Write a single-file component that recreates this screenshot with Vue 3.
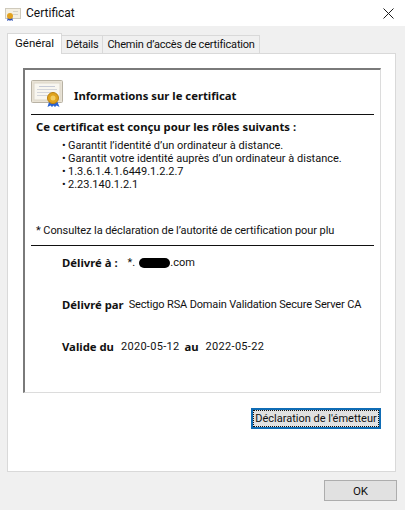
<script setup>
const purposes = [
  'Garantit l’identité d’un ordinateur à distance.',
  'Garantit votre identité auprès d’un ordinateur à distance.',
  '1.3.6.1.4.1.6449.1.2.2.7',
  '2.23.140.1.2.1'
]
const tabs = ['Général', 'Détails', 'Chemin d’accès de certification']
</script>

<template>
  <div class="dialog">
    <header class="titlebar">
      <svg class="title-icon" width="16" height="16" viewBox="0 0 16 16">
        <rect x="0.5" y="2.5" width="15" height="10" fill="#f4efe2" stroke="#cfcabc" />
        <rect x="8" y="5" width="5" height="1" fill="#d5d2c8" />
        <rect x="8" y="8" width="5" height="1" fill="#d5d2c8" />
        <path d="M3 11l-1 4 2-1 1 1 1-1 2 1-1-4z" fill="#2f4fb4" />
        <circle cx="5" cy="10" r="3" fill="#e2a11e" />
      </svg>
      <span class="title-text">Certificat</span>
      <svg class="close" width="11" height="11" viewBox="0 0 11 11">
        <path d="M0.500 0.500L10.500 10.500M10.500 0.500L0.500 10.500" stroke="#1a1a1a" fill="none" />
      </svg>
    </header>

    <main class="body">
      <nav class="tabs">
        <span
          v-for="(tab, i) in tabs"
          :key="tab"
          class="tab"
          :class="{ active: i === 0 }"
        >{{ tab }}</span>
      </nav>

      <section class="panel">
        <div class="info">
          <div class="info-head">
            <svg class="cert" width="32" height="28" viewBox="0 0 32 28">
              <rect x="0.500" y="0.500" width="31" height="22" rx="1" fill="#e9e3d6" stroke="#b8b2a4" />
              <rect x="3" y="3" width="26" height="17" fill="#f8f6f0" stroke="#dcd6c8" />
              <rect x="8" y="6" width="16" height="1" fill="#c6cad6" />
              <rect x="6" y="9" width="20" height="1" fill="#d3d5da" />
              <rect x="6" y="12" width="14" height="1" fill="#d3d5da" />
              <rect x="6" y="15" width="11" height="1" fill="#d3d5da" />
              <path d="M18 22l-1.500 5 3-1.500 1.500 1.500 1.500-1.500 1.500 1.500 1.500-1.500 3 1.500-2-5z" fill="#2a62d0" />
              <circle cx="22" cy="18" r="5.500" fill="#e0a31c" stroke="#b87f10" />
              <circle cx="22" cy="18" r="2.500" fill="#f2cd62" />
            </svg>
            <h1 class="info-title">Informations sur le certificat</h1>
          </div>

          <div class="purposes">
            <h2 class="purposes-title">Ce certificat est conçu pour les rôles suivants :</h2>
            <ul class="purpose-list">
              <li v-for="p in purposes" :key="p">{{ p }}</li>
            </ul>
            <p class="note">* Consultez la déclaration de l’autorité de certification pour plu</p>
          </div>

          <div class="fields">
            <p class="field first"><b>Délivré à :</b><span class="gap-a">*.</span><span class="redact"></span><span>.com</span></p>
            <p class="field"><b>Délivré par</b><span class="gap-b issuer-name">Sectigo RSA Domain Validation Secure Server CA</span></p>
            <p class="field"><b>Valide du</b><span class="gap-c date">2020-05-12</span><b class="gap-au">au</b><span class="gap-c date">2022-05-22</span></p>
          </div>
        </div>

        <div class="issuer-row">
          <button class="btn issuer">Déclaration de l'émetteur</button>
        </div>
      </section>
    </main>

    <footer class="footer">
      <button class="btn ok">OK</button>
    </footer>
  </div>
</template>

<style>
html, body { margin: 0; background: #f0f0f0; }
</style>

<style scoped>
.dialog {
  width: 405px;
  height: 510px;
  overflow: hidden;
  display: flex;
  flex-direction: column;
  background: #f0f0f0;
  font-family: Roboto, "Noto Sans", sans-serif;
  font-size: 11px;
  color: #111;
}
.dialog b, .info-title, .purposes-title {
  font-family: "Noto Sans", sans-serif;
  font-size: 11.3px;
  font-weight: 700;
}
.titlebar {
  height: 26px;
  flex: none;
  display: flex;
  align-items: center;
  background: #fff;
  padding: 0 11px 0 5px;
}
.title-icon { margin-right: 5px; margin-top: 2px; }
.title-text { font-size: 12px; }
.close { margin-left: auto; }
.body { padding: 7px 9px 0 7px; }
.tabs {
  display: flex;
  align-items: flex-end;
  height: 20px;
  position: relative;
  z-index: 1;
}
.tab {
  height: 17px;
  line-height: 18px;
  padding: 0 4px;
  background: #f0f0f0;
  border: 1px solid #d9d9d9;
  border-bottom: 0;
  margin-right: -1px;
  font-size: 11px;
  letter-spacing: -0.2px;
  white-space: nowrap;
}
.tab.active {
  height: 20px;
  line-height: 19px;
  padding: 0 7px;
  font-size: 11.5px;
  letter-spacing: 0;
  background: #fff;
  margin-bottom: -1px;
}
.panel {
  height: 419px;
  box-sizing: border-box;
  background: #fff;
  border: 1px solid #d9d9d9;
  padding: 14px 14px 0 15px;
}
.info {
  height: 325px;
  box-sizing: border-box;
  border: 1px solid #dcdcdc;
  border-top: 2px solid #7a7a7a;
  border-left: 2px solid #7a7a7a;
  padding: 0 6px;
}
.info-head {
  display: flex;
  align-items: center;
  height: 44px;
  border-bottom: 1px solid #111;
}
.cert { margin-right: 11px; margin-top: 3px; flex: none; }
.info-title { margin: 6px 0 0; }
.purposes {
  height: 131px;
  box-sizing: border-box;
  border-bottom: 1px solid #111;
  padding: 4px 0 0 5px;
}
.purposes-title {
  margin: 0 0 4px;
  line-height: 16px;
}
.purpose-list {
  margin: 0;
  padding: 0 0 0 26px;
  list-style: none;
  line-height: 13px;
  white-space: nowrap;
}
.purpose-list li::before {
  content: "•";
  display: inline-block;
  width: 6px;
}
.note {
  margin: 32px 0 0;
  line-height: 16px;
  white-space: nowrap;
  letter-spacing: -0.08px;
}
.fields { padding: 0 0 0 31px; }
.field {
  margin: 0 0 26px;
  height: 16px;
  line-height: 16px;
  display: flex;
  align-items: center;
  white-space: nowrap;
}
.field.first { margin-top: 9px; }
.issuer-name { letter-spacing: -0.15px; }
.date { letter-spacing: 0.3px; }
.gap-a { margin-left: 10px; }
.gap-b { margin-left: 5px; }
.gap-c { margin-left: 7px; }
.gap-au { margin-left: 5px; }
.redact {
  width: 31px;
  height: 10px;
  margin-left: 4px;
  border-radius: 5px;
  background: #000;
}
.issuer-row {
  display: flex;
  justify-content: flex-end;
  padding-top: 15px;
}
.btn {
  font: inherit;
  color: #111;
  background: #e1e1e1;
  border: 1px solid #adadad;
  padding: 0;
  white-space: nowrap;
}
.issuer {
  width: 130px;
  height: 21px;
  border: 2px solid #0f6cb5;
  outline: 1px dotted #111;
  outline-offset: -3px;
}
.footer {
  display: flex;
  justify-content: flex-end;
  padding: 8px 8px 0 0;
}
.ok {
  width: 73px;
  height: 21px;
  font-size: 11.5px;
}
</style>
